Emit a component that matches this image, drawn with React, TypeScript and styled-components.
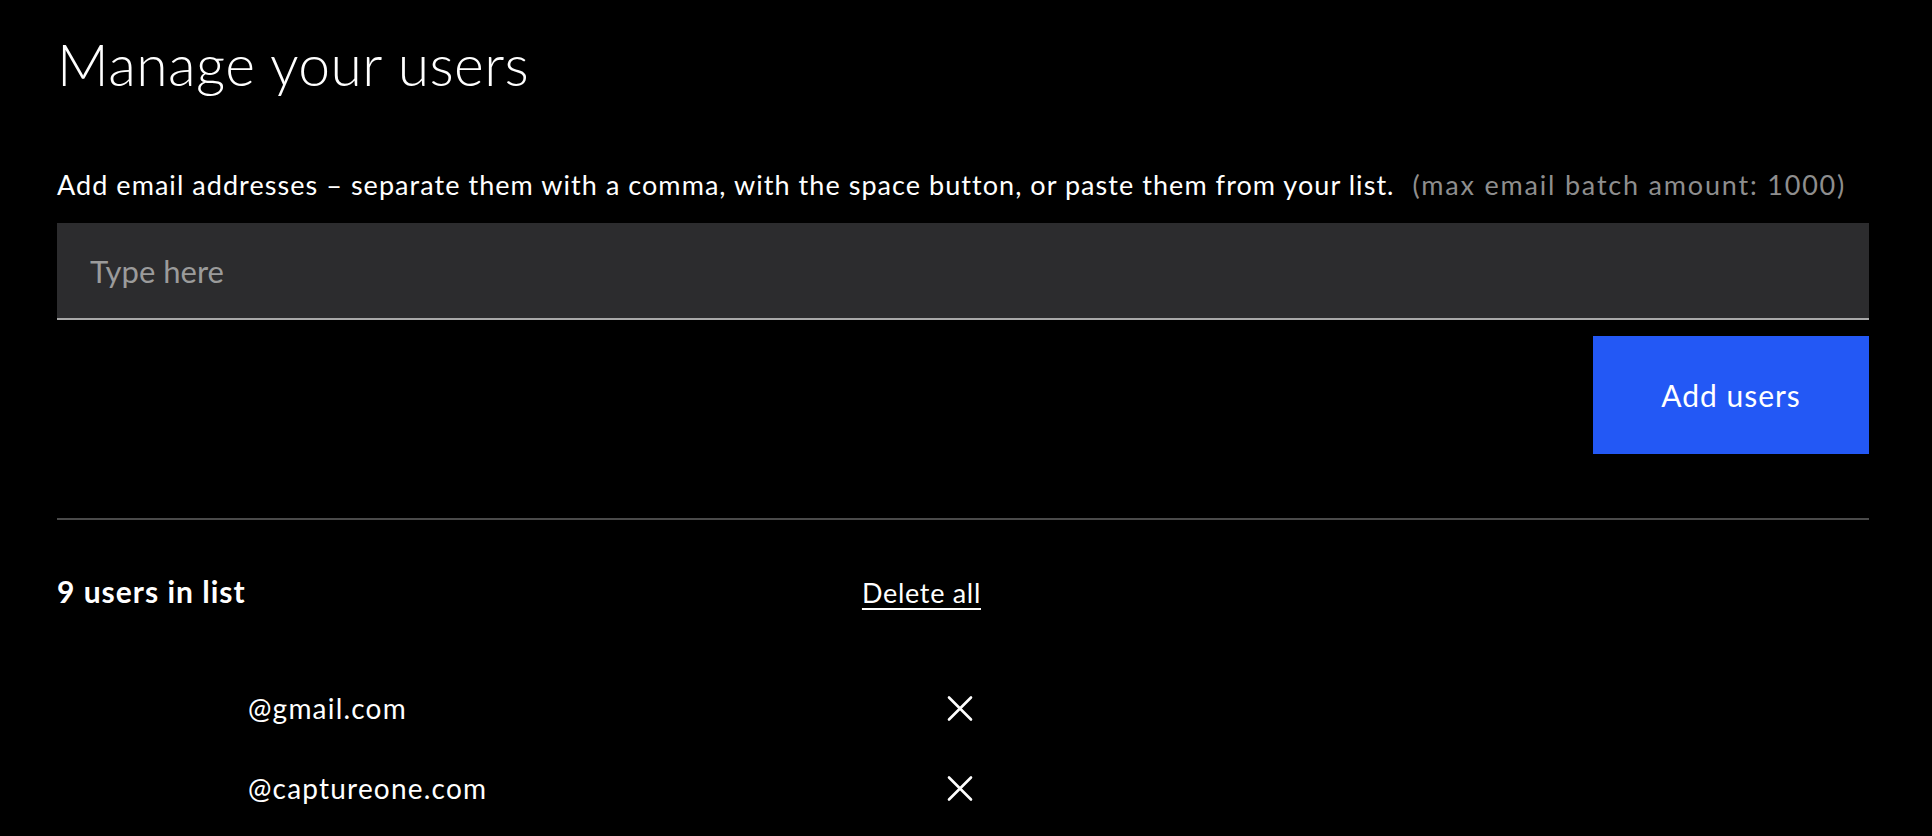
import React from 'react';
import styled, {createGlobalStyle} from 'styled-components';

const GlobalStyle = createGlobalStyle`
    html, body {
        margin: 0;
        padding: 0;
        background: #000;
    }

    body {
        color: #fff;
        font-family: Lato, 'Noto Sans', sans-serif;
    }
`;

const Page = styled.div`
    display: flex;
    flex-direction: column;
    padding: 31px 63px 0 57px;
    min-height: 836px;
    box-sizing: border-box;
`;

const Title = styled.h1`
    margin: 0;
    font-size: 57px;
    font-weight: 300;
    line-height: 67px;
    letter-spacing: 0.45px;
`;

const Hint = styled.p`
    margin: 70px 0 0;
    font-size: 27px;
    line-height: 34px;
    font-weight: 400;
    letter-spacing: 1.05px;
    white-space: nowrap;
`;

const Muted = styled.span`
    margin-left: 18px;
    color: #8e8e8e;
    letter-spacing: 1.8px;
`;

const EmailInput = styled.input`
    margin-top: 21px;
    height: 97px;
    box-sizing: border-box;
    padding: 0 33px;
    border: none;
    border-bottom: 2px solid #a9a9a9;
    background: #2c2c2e;
    color: #fff;
    font-family: inherit;
    font-size: 31px;
    outline: none;

    &::placeholder {
        color: #9b9b9b;
    }
`;

const Actions = styled.div`
    display: flex;
    justify-content: flex-end;
    margin-top: 16px;
`;

const PrimaryButton = styled.button`
    width: 276px;
    height: 118px;
    border: none;
    background: #2358f5;
    color: #fff;
    font-family: inherit;
    font-size: 30px;
    letter-spacing: 1px;
    cursor: pointer;
`;

const Divider = styled.div`
    height: 2px;
    background: #4a4a4a;
    margin-top: 64px;
`;

const UserList = styled.div`
    display: flex;
    flex-direction: column;
    width: 924px;
`;

const ListHeader = styled.div`
    display: flex;
    justify-content: space-between;
    align-items: baseline;
    margin-top: 53px;
    line-height: 36px;
`;

const Count = styled.span`
    font-size: 30px;
    font-weight: 700;
    letter-spacing: 1px;
`;

const DeleteAll = styled.button`
    padding: 0;
    border: none;
    background: none;
    color: #fff;
    font-family: inherit;
    font-size: 27px;
    line-height: 36px;
    letter-spacing: 0.7px;
    text-decoration: underline;
    text-underline-offset: 5px;
    text-decoration-thickness: 2px;
    cursor: pointer;
`;

const Rows = styled.div`
    margin-top: 57px;
`;

const UserRow = styled.div`
    display: flex;
    justify-content: space-between;
    align-items: center;
    height: 80px;
    padding: 0 8px 0 191px;
    font-size: 28px;
    letter-spacing: 1.2px;
`;

const RemoveButton = styled.button`
    display: flex;
    padding: 0;
    border: none;
    background: none;
    color: #fff;
    cursor: pointer;
`;

const CloseIcon = () => (
    <svg
        width='26'
        height='27'
        viewBox='0 0 26 27'
        fill='none'
        stroke='currentColor'
        strokeWidth='2.6'
        strokeLinecap='round'
    >
        <path d='M2 2.5L24 24.5M24 2.5L2 24.5'/>
    </svg>
);

const users = ['@gmail.com', '@captureone.com'];

const App = () => (
    <>
        <GlobalStyle/>
        <Page>
            <Title>{'Manage your users'}</Title>
            <Hint>
                {'Add email addresses – separate them with a comma, with the space button, or paste them from your list.'}
                <Muted>{'(max email batch amount: 1000)'}</Muted>
            </Hint>
            <EmailInput
                type='text'
                placeholder='Type here'
            />
            <Actions>
                <PrimaryButton>{'Add users'}</PrimaryButton>
            </Actions>
            <Divider/>
            <UserList>
                <ListHeader>
                    <Count>{'9 users in list'}</Count>
                    <DeleteAll>{'Delete all'}</DeleteAll>
                </ListHeader>
                <Rows>
                    {users.map((email) => (
                        <UserRow key={email}>
                            <span>{email}</span>
                            <RemoveButton aria-label={'Remove ' + email}>
                                <CloseIcon/>
                            </RemoveButton>
                        </UserRow>
                    ))}
                </Rows>
            </UserList>
        </Page>
    </>
);

export default App;
